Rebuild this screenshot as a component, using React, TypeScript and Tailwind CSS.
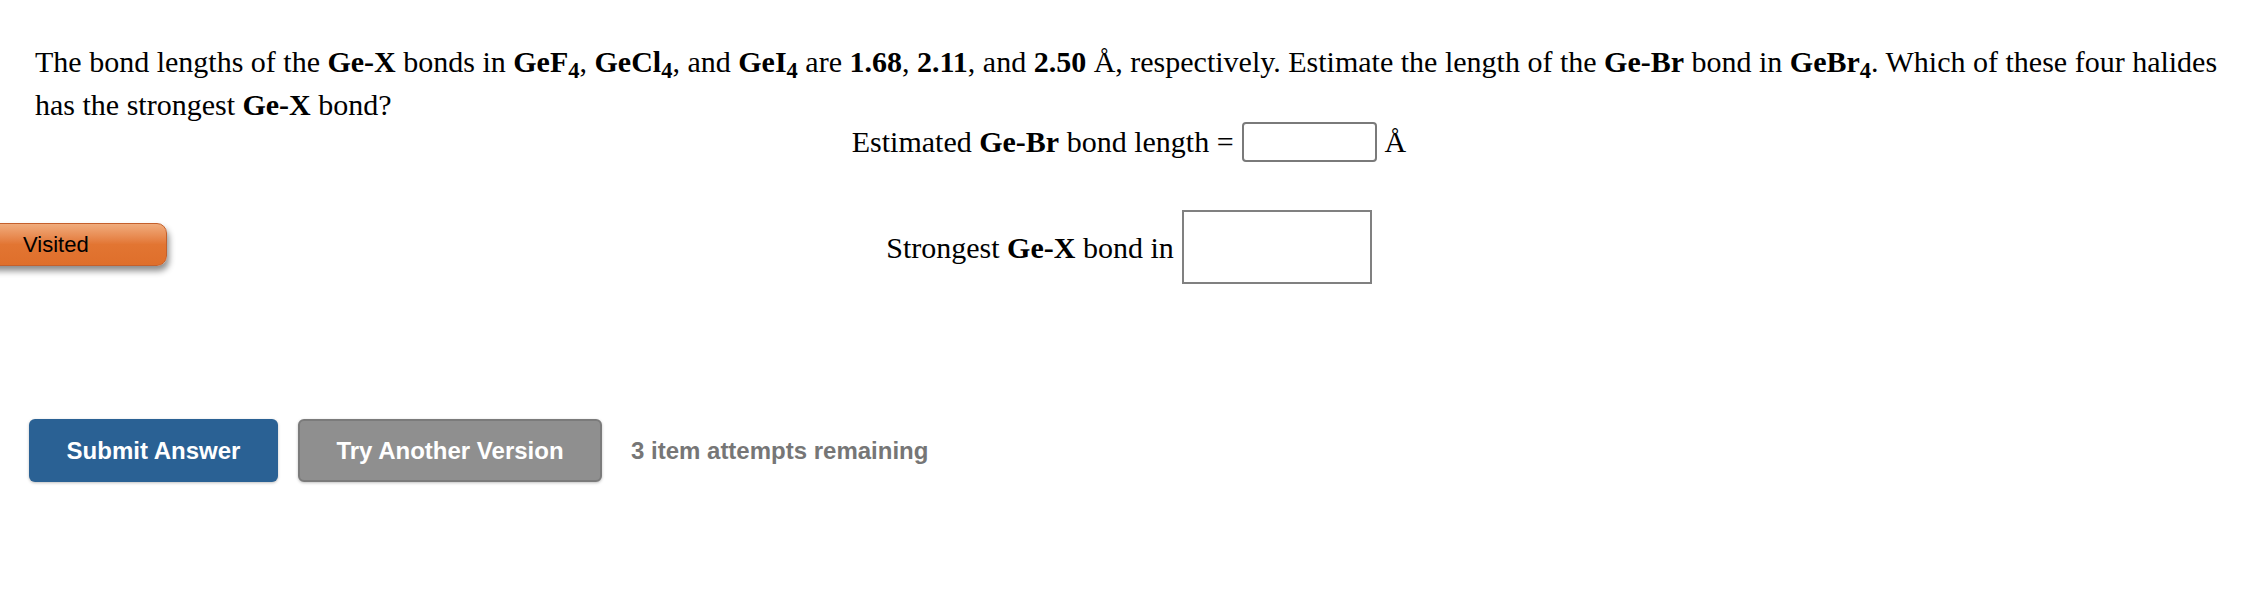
import React from 'react';

const serif = { fontFamily: '"Liberation Serif", "Times New Roman", serif' };

export default function App() {
  return (
    <div className="relative min-h-[604px] w-full bg-white text-black" style={serif}>
      {/* Visited tab */}
      <div
        className="absolute left-[-24px] top-[223px] flex h-[43px] w-[191px] items-center rounded-[10px] border border-[#c4602c] bg-gradient-to-b from-[#f0ac7c] via-[#e27532] to-[#df6f2b] pl-[46px] text-[22px] text-black shadow-[2px_5px_6px_rgba(0,0,0,0.45)]"
        style={{ fontFamily: '"Liberation Sans", Arial, sans-serif' }}
      >
        Visited
      </div>

      <div className="pl-[35px] pr-[28px] pt-[40px]">
        <p className="text-[30px] leading-[43px]">
          The bond lengths of the <b>Ge-X</b> bonds in <b>GeF<sub>4</sub></b>, <b>GeCl<sub>4</sub></b>, and{' '}
          <b>GeI<sub>4</sub></b> are <b>1.68</b>, <b>2.11</b>, and <b>2.50</b> Å, respectively. Estimate the length
          of the <b>Ge-Br</b> bond in <b>GeBr<sub>4</sub></b>. Which of these four halides has the strongest{' '}
          <b>Ge-X</b> bond?
        </p>
      </div>

      <div className="px-[35px]">
        <div className="-mt-[7px] flex items-center justify-center text-[30px]">
          <span>
            Estimated <b>Ge-Br</b> bond length =
          </span>
          <div className="ml-[8px] h-[40px] w-[135px] rounded-[4px] border-2 border-[#7a7a7a] bg-white" />
          <span className="ml-[8px]">Å</span>
        </div>

        <div className="mt-[46px] flex items-center justify-center text-[30px]">
          <span>
            Strongest <b>Ge-X</b> bond in
          </span>
          <div className="ml-[8px] h-[74px] w-[190px] border-2 border-[#808080] bg-white" />
        </div>

        <div
          className="mt-[135px] -ml-[6px] flex items-center gap-[20px] text-[24px] font-bold"
          style={{ fontFamily: '"Liberation Sans", Arial, sans-serif' }}
        >
          <button className="h-[63px] w-[249px] rounded-[6px] bg-[#2a6194] text-white shadow-[0_1px_3px_rgba(0,0,0,0.25)]">
            Submit Answer
          </button>
          <button className="h-[63px] w-[304px] rounded-[6px] border-2 border-[#7b7b7b] bg-[#8f8f8f] text-white shadow-[0_1px_3px_rgba(0,0,0,0.25)]">
            Try Another Version
          </button>
          <span className="ml-[9px] text-[#767676]">3 item attempts remaining</span>
        </div>
      </div>
    </div>
  );
}
